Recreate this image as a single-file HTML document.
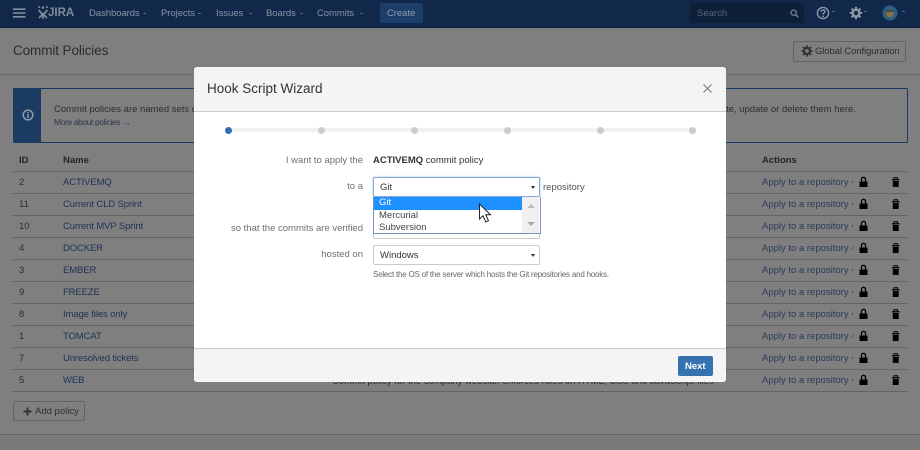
<!DOCTYPE html>
<html><head><meta charset="utf-8">
<style>
html,body{margin:0;padding:0;width:920px;height:450px;overflow:hidden;background:#7f7f7f;font-family:"Liberation Sans",sans-serif;}
.a{position:absolute;white-space:nowrap;line-height:14px;font-size:9.5px;}
.nav{color:#8696a8;font-size:9.5px;letter-spacing:-.05px}
.line{position:absolute;left:13px;width:894px;height:1px;background:#636363}
.id{color:#2e2e2e;left:19px}
.nm{color:#1e3254;left:63px;letter-spacing:-.12px}
.ap{color:#2a3c5a;left:762px}
.lb{color:#707070;right:557px;text-align:right}
.sel{position:absolute;left:373px;width:165px;height:18px;background:#fff;border:1px solid #ccc;border-radius:2px}
.sel span{position:absolute;left:6px;top:3px;font-size:9.5px;line-height:14px;color:#333}
.sel i{position:absolute;left:157px;top:8px;width:0;height:0;border-left:2px solid transparent;border-right:2px solid transparent;border-top:3px solid #333}
</style></head><body>

<div style="position:absolute;left:0;top:0;width:920px;height:27px;background:#11284a"></div>
<div style="position:absolute;left:0;top:27px;width:920px;height:1px;background:#0d1f3a"></div>

<svg style="position:absolute;left:13px;top:8px" width="13" height="10"><path d="M0 1.200h12.500M0 5h12.500M0 8.800h12.500" stroke="#8490a0" stroke-width="1.600" fill="none"/></svg>
<svg style="position:absolute;left:37px;top:5px" width="12" height="15"><circle cx="6" cy="2.500" r="1.300" fill="#7f8b9b"/><circle cx="2" cy="2" r="1" fill="#7f8b9b"/><circle cx="10" cy="2" r="1" fill="#7f8b9b"/><path d="M1.500 5L6 10L10.500 5M6 8V14M2 13L6 9L10 13" stroke="#7f8b9b" stroke-width="1.700" fill="none"/></svg>
<div class="a" style="left:48px;top:6px;font-size:11.500px;font-weight:bold;color:#7f8b9b;line-height:15px">JIRA</div>
<div class="a nav" style="left:89px;top:7px">Dashboards</div><div class="a nav" style="left:143px;top:7px">-</div>
<div class="a nav" style="left:161px;top:7px">Projects</div><div class="a nav" style="left:198px;top:7px">-</div>
<div class="a nav" style="left:216px;top:7px">Issues</div><div class="a nav" style="left:249px;top:7px">-</div>
<div class="a nav" style="left:266px;top:7px">Boards</div><div class="a nav" style="left:300px;top:7px">-</div>
<div class="a nav" style="left:317px;top:7px">Commits</div><div class="a nav" style="left:360px;top:7px">-</div>
<div style="position:absolute;left:380px;top:3px;width:43px;height:20px;background:#1d3e68;border-radius:2px"></div>
<div class="a nav" style="left:387px;top:7px;color:#8c9db0">Create</div>

<div style="position:absolute;left:690px;top:3px;width:114px;height:20px;background:#0e2038;border-radius:2px"></div>
<div class="a" style="left:697px;top:7px;color:#56657a">Search</div>
<svg style="position:absolute;left:790px;top:9px" width="9" height="9"><circle cx="3.700" cy="3.700" r="2.600" stroke="#6d7a8c" stroke-width="1.400" fill="none"/><path d="M5.700 5.700L8.300 8.300" stroke="#6d7a8c" stroke-width="1.500"/></svg>
<svg style="position:absolute;left:816px;top:6px" width="15" height="15"><circle cx="7" cy="7" r="5.600" stroke="#8c97a5" stroke-width="1.400" fill="none"/><path d="M5 5.600C5 3.600 9 3.600 9 5.600C9 7 7 7 7 8.600" stroke="#8c97a5" stroke-width="1.400" fill="none"/><circle cx="7" cy="10.400" r=".9" fill="#8c97a5"/></svg>
<div class="a nav" style="left:832px;top:5px">-</div>
<svg style="position:absolute;left:849px;top:6px" width="14" height="14"><circle cx="7" cy="7" r="3.400" stroke="#8c97a5" stroke-width="2.400" fill="none"/><path d="M7 0.800V13.200M0.800 7H13.200M2.600 2.600L11.400 11.400M11.400 2.600L2.600 11.400" stroke="#8c97a5" stroke-width="2" fill="none" stroke-dasharray="2.200 8 2.200 0"/></svg>
<div class="a nav" style="left:864px;top:5px">-</div>
<svg style="position:absolute;left:882px;top:5px" width="16" height="16"><circle cx="8" cy="8" r="7.500" fill="#2d5f86"/><circle cx="8" cy="9" r="3.600" fill="#8f6f3e"/><path d="M3.800 7C5 3.800 11 3.800 12.200 7Z" fill="#4a4a3c"/></svg>
<div class="a nav" style="left:902px;top:5px">-</div>

<div class="a" style="left:13px;top:42px;font-size:13.500px;line-height:17px;color:#2c2c2c;letter-spacing:-.1px">Commit Policies</div>
<div style="position:absolute;left:793px;top:41px;width:111px;height:19px;border:1px solid #636363;border-radius:2px"></div>
<svg style="position:absolute;left:801px;top:45px" width="12" height="12"><circle cx="6" cy="6" r="3" stroke="#333" stroke-width="2.200" fill="none"/><path d="M6 0.400V11.600M0.400 6H11.600M2 2L10 10M10 2L2 10" stroke="#333" stroke-width="1.800" stroke-dasharray="2 7.200 2 0" fill="none"/></svg>
<div class="a" style="left:815px;top:45px;color:#2e2e2e;letter-spacing:-.1px">Global Configuration</div>
<div style="position:absolute;left:0;top:74px;width:920px;height:1px;background:#6a6a6a"></div>

<div style="position:absolute;left:13px;top:88px;width:893px;height:53px;border:1px solid #143a63;border-radius:2px"></div>
<div style="position:absolute;left:13px;top:88px;width:28px;height:55px;background:#1b3b62;border-radius:2px 0 0 2px"></div>
<svg style="position:absolute;left:22px;top:109px" width="12" height="12"><circle cx="6" cy="6" r="4.800" stroke="#8a98a9" stroke-width="1.600" fill="none"/><path d="M6 5V9M6 3V4.300" stroke="#8a98a9" stroke-width="1.600"/></svg>
<div class="a" style="left:54px;top:103px;color:#2e2e2e">Commit policies are named sets o</div>
<div class="a" style="left:54px;top:115px;color:#2e3a4c;font-size:8.500px;letter-spacing:-.4px">More about policies</div>
<div class="a" style="left:123px;top:115px;color:#2e3a4c;font-size:8.500px">→</div>
<div class="a" style="left:726px;top:103px;color:#2e2e2e">te, update or delete them here.</div>

<div class="a" style="left:19px;top:154px;font-weight:bold;color:#252525">ID</div>
<div class="a" style="left:63px;top:154px;font-weight:bold;color:#252525">Name</div>
<div class="a" style="left:762px;top:154px;font-weight:bold;color:#252525">Actions</div>

<div class="line" style="top:171px"></div><div class="line" style="top:193px"></div><div class="line" style="top:215px"></div><div class="line" style="top:237px"></div><div class="line" style="top:259px"></div><div class="line" style="top:281px"></div><div class="line" style="top:303px"></div><div class="line" style="top:325px"></div><div class="line" style="top:347px"></div><div class="line" style="top:369px"></div><div class="line" style="top:391px"></div>

<div class="a id" style="top:176px">2</div><div class="a nm" style="top:176px">ACTIVEMQ</div>
<div class="a id" style="top:198px">11</div><div class="a nm" style="top:198px">Current CLD Sprint</div>
<div class="a id" style="top:220px">10</div><div class="a nm" style="top:220px">Current MVP Sprint</div>
<div class="a id" style="top:242px">4</div><div class="a nm" style="top:242px">DOCKER</div>
<div class="a id" style="top:264px">3</div><div class="a nm" style="top:264px">EMBER</div>
<div class="a id" style="top:286px">9</div><div class="a nm" style="top:286px">FREEZE</div>
<div class="a id" style="top:308px">8</div><div class="a nm" style="top:308px">Image files only</div>
<div class="a id" style="top:330px">1</div><div class="a nm" style="top:330px">TOMCAT</div>
<div class="a id" style="top:352px">7</div><div class="a nm" style="top:352px">Unresolved tickets</div>
<div class="a id" style="top:374px">5</div><div class="a nm" style="top:374px">WEB</div>
<div class="a" style="left:332px;top:375px;color:#2e2e2e">Commit policy for the company website: enforces rules on HTML, CSS and JavaScript files</div>

<svg style="position:absolute;left:762px;top:171px" width="140" height="220">
<g id="r">
<circle cx="90.500" cy="11" r=".7" fill="#2a3c5a"/>
<path d="M97.500 10.500h8v5.500h-8z" fill="#000"/>
<path d="M99.500 10.500V8.300a2 2 0 0 1 4 0v2.200" stroke="#000" stroke-width="1.300" fill="none"/>
<path d="M130 8.800h7.500" stroke="#000" stroke-width="1.300"/>
<path d="M132 8.500V6.800h3.500v1.700" stroke="#000" stroke-width="1" fill="none"/>
<path d="M130.800 10h5.900v6h-5.900z" fill="#000"/>
</g>
<use href="#r" y="22"/><use href="#r" y="44"/><use href="#r" y="66"/><use href="#r" y="88"/><use href="#r" y="110"/><use href="#r" y="132"/><use href="#r" y="154"/><use href="#r" y="176"/><use href="#r" y="198"/>
</svg>
<div class="a ap" style="top:176px">Apply to a repository</div>
<div class="a ap" style="top:198px">Apply to a repository</div>
<div class="a ap" style="top:220px">Apply to a repository</div>
<div class="a ap" style="top:242px">Apply to a repository</div>
<div class="a ap" style="top:264px">Apply to a repository</div>
<div class="a ap" style="top:286px">Apply to a repository</div>
<div class="a ap" style="top:308px">Apply to a repository</div>
<div class="a ap" style="top:330px">Apply to a repository</div>
<div class="a ap" style="top:352px">Apply to a repository</div>
<div class="a ap" style="top:374px">Apply to a repository</div>

<div style="position:absolute;left:13px;top:401px;width:70px;height:18px;border:1px solid #636363;border-radius:2px"></div>
<svg style="position:absolute;left:23px;top:407px" width="9" height="9"><path d="M4.500 0.500V8.500M0.500 4.500H8.500" stroke="#333" stroke-width="2"/></svg>
<div class="a" style="left:35px;top:405px;color:#2e2e2e">Add policy</div>
<div style="position:absolute;left:0;top:434px;width:920px;height:1px;background:#656565"></div>
<div style="position:absolute;left:0;top:435px;width:920px;height:15px;background:#7a7a7a"></div>

<!-- modal -->
<div style="position:absolute;left:194px;top:67px;width:532px;height:315px;background:#fff;border-radius:3px;overflow:hidden">
  <div style="position:absolute;left:0;top:0;width:532px;height:44px;background:#f4f4f4;border-bottom:1px solid #ccc"></div>
  <div style="position:absolute;left:0;top:281px;width:532px;height:33px;background:#f4f4f4;border-top:1px solid #ccc"></div>
</div>
<div class="a" style="left:207px;top:80px;font-size:13.500px;line-height:17px;color:#333">Hook Script Wizard</div>
<svg style="position:absolute;left:703px;top:84px" width="9" height="9"><path d="M0.500 0.500L8.500 8.500M8.500 0.500L0.500 8.500" stroke="#777" stroke-width="1.100"/></svg>

<div style="position:absolute;left:225px;top:128px;width:471px;height:4px;background:#f1f1f1"></div>
<div style="position:absolute;left:225px;top:126.500px;width:7px;height:7px;background:#2f6eb0;border-radius:50%"></div>
<div style="position:absolute;left:318px;top:126.500px;width:7px;height:7px;background:#ccc;border-radius:50%"></div>
<div style="position:absolute;left:411px;top:126.500px;width:7px;height:7px;background:#ccc;border-radius:50%"></div>
<div style="position:absolute;left:504px;top:126.500px;width:7px;height:7px;background:#ccc;border-radius:50%"></div>
<div style="position:absolute;left:597px;top:126.500px;width:7px;height:7px;background:#ccc;border-radius:50%"></div>
<div style="position:absolute;left:689px;top:126.500px;width:7px;height:7px;background:#ccc;border-radius:50%"></div>

<div class="a lb" style="top:154px">I want to apply the</div>
<div class="a" style="left:373px;top:154px;color:#333"><b>ACTIVEMQ</b> commit policy</div>
<div class="a lb" style="top:180px">to a</div>
<div class="sel" style="top:177px;height:18px;border-color:#86a8d8;box-shadow:0 0 2px #9fbfe6"><span>Git</span><i></i></div>
<div class="a" style="left:543px;top:181px;color:#555">repository</div>
<div class="a lb" style="top:222px">so that the commits are verified</div>

<div class="sel" style="top:220px;height:17px"></div>
<div style="position:absolute;left:373px;top:197px;width:166px;height:36px;background:#fff;border:1px solid #7b93c4;border-top:0"></div>
<div style="position:absolute;left:374px;top:197px;width:148px;height:13px;background:#1e90ff"></div>
<div class="a" style="left:379px;top:196px;color:#fff">Git</div>
<div class="a" style="left:379px;top:209px;color:#444">Mercurial</div>
<div class="a" style="left:379px;top:221px;color:#444">Subversion</div>
<div style="position:absolute;left:522px;top:197px;width:17px;height:36px;background:#f0f0f0"></div>
<div style="position:absolute;left:527px;top:204px;width:0;height:0;border-left:4px solid transparent;border-right:4px solid transparent;border-bottom:4px solid #bbb"></div>
<div style="position:absolute;left:527px;top:222px;width:0;height:0;border-left:4px solid transparent;border-right:4px solid transparent;border-top:4px solid #aaa"></div>
<svg style="position:absolute;left:478px;top:203px" width="14" height="21"><path d="M1.500 1V16L5 12.800L7.800 19L10.500 17.800L7.800 11.800H12.500Z" fill="#fff" stroke="#222" stroke-width="1"/></svg>

<div class="a lb" style="top:248px">hosted on</div>
<div class="sel" style="top:245px"><span>Windows</span><i></i></div>
<div class="a" style="left:373px;top:268px;color:#666;font-size:8px;letter-spacing:-.21px">Select the OS of the server which hosts the Git repositories and hooks.</div>

<div style="position:absolute;left:678px;top:356px;width:35px;height:20px;background:#3572b0;border-radius:2px"></div>
<div class="a" style="left:685px;top:360px;color:#fff;font-weight:bold">Next</div>

</body></html>
